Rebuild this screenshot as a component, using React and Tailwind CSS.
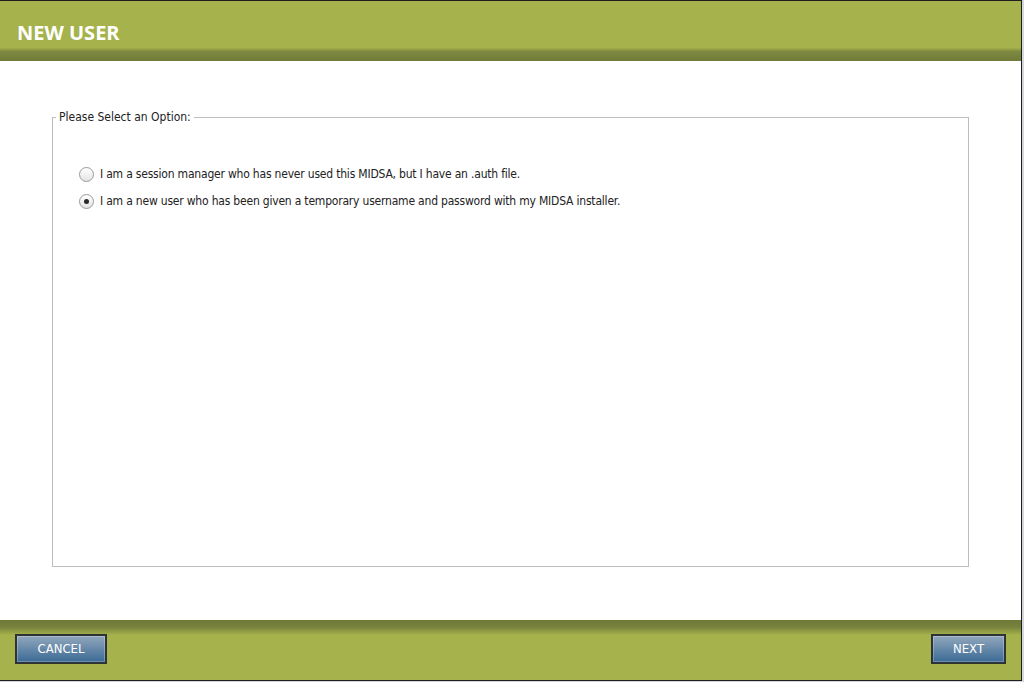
import { useState } from "react";

const options = [
    { id: "auth", label: "I am a session manager who has never used this MIDSA, but I have an .auth file." },
    { id: "temp", label: "I am a new user who has been given a temporary username and password with my MIDSA installer." },
];

function Radio({ checked }) {
    return (
        <span className="relative flex h-[15px] w-[15px] shrink-0 items-center justify-center rounded-full border border-[#9a9a9a] bg-[linear-gradient(to_bottom,#ffffff,#e4e4e4)]">
            {checked && <span className="h-[5px] w-[5px] rounded-full bg-[#2a2a2a]"></span>}
        </span>
    );
}

function Button({ children, className }) {
    return (
        <button className={"h-[30px] border-2 border-[#2e3436] bg-[linear-gradient(to_bottom,#91a7bc,#3b6a95)] text-[13px] text-white shadow-[inset_0_0_0_1px_rgba(255,255,255,0.25)] " + className}>
            {children}
        </button>
    );
}

export default function App() {
    const [selected, setSelected] = useState("temp");

    return (
        <div className="h-[682px] w-[1024px] bg-[#d3d6da]" style={{ fontFamily: '"DejaVu Sans Condensed", "DejaVu Sans", sans-serif' }}>
            <div className="flex h-[681px] w-[1022px] flex-col border-y border-r border-[#1e1e1e]">
                <div className="flex h-[60px] shrink-0 items-center bg-[linear-gradient(to_bottom,#a6b24c_0%,#a6b24c_78%,#7e8941_84%,#717b39_100%)] pl-[17px] pt-[3px]">
                    <h1 className="text-[20px] font-bold text-white" style={{ fontFamily: '"Open Sans", sans-serif' }}>NEW USER</h1>
                </div>

                <div className="flex flex-1 flex-col bg-white px-[52px] pb-[53px] pt-[47px]">
                    <fieldset className="flex-1 border border-[#bdbdbd]">
                        <legend className="ml-[3px] px-[3px] text-[12px] text-[#222]">Please Select an Option:</legend>
                        <div className="mt-[39px] flex flex-col gap-[9px] px-[26px]">
                            {options.map((o) => (
                                <label key={o.id} className="flex items-center gap-[6px] text-[12px] tracking-[-0.2px] text-[#222]" onClick={() => setSelected(o.id)}>
                                    <Radio checked={selected === o.id} />
                                    <span>{o.label}</span>
                                </label>
                            ))}
                        </div>
                    </fieldset>
                </div>

                <div className="flex h-[60px] shrink-0 items-start justify-between bg-[linear-gradient(to_bottom,#6f7938_0%,#77823c_12%,#a6b24c_25%,#a6b24c_100%)] px-[15px] pt-[14px]">
                    <Button className="w-[92px]">CANCEL</Button>
                    <Button className="w-[75px]">NEXT</Button>
                </div>
            </div>
        </div>
    );
}
